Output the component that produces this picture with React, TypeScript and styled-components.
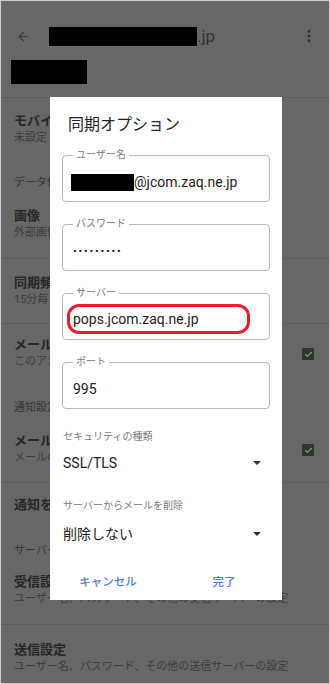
import React from "react";
import styled, { createGlobalStyle } from "styled-components";
import { ArrowLeft, EllipsisVertical, Check } from "lucide-react";

const GlobalStyle = createGlobalStyle`
  body {
    margin: 0;
    font-family: Roboto, "Noto Sans CJK JP", sans-serif;
  }
`;

const Screen = styled.div`
  position: relative;
  width: 330px;
  height: 684px;
  box-sizing: border-box;
  border: 1px solid #cfcfcf;
  background: #676767;
  overflow: hidden;
  font-family: Roboto, "Noto Sans CJK JP", sans-serif;
`;

const Header = styled.div`
  height: 96px;
  display: flex;
  flex-direction: column;
`;

const AppBar = styled.div`
  display: flex;
  align-items: center;
  height: 20px;
  margin-top: 25px;
  padding: 0 12px 0 15px;
  color: #333;
`;

const BarTitle = styled.div`
  flex: 1;
  display: flex;
  align-items: center;
  margin-left: 18px;
  font-size: 17px;
  color: #333;
`;

const Redact = styled.span<{ w: number; h: number }>`
  display: inline-block;
  width: ${(p) => p.w}px;
  height: ${(p) => p.h}px;
  background: #000;
`;

const AccountRow = styled.div`
  margin: 14px 0 0 10px;
`;

const Divider = styled.div`
  height: 1px;
  background: #5d5d5d;
`;

const Item = styled.div<{ h: number; pt: number }>`
  height: ${(p) => p.h}px;
  box-sizing: border-box;
  padding: ${(p) => p.pt}px 15px 0 13px;
  display: flex;
  align-items: flex-start;
  white-space: nowrap;
`;

const ItemText = styled.div`
  flex: 1;
  display: flex;
  flex-direction: column;
`;

const ItemTitle = styled.div`
  font-size: 13px;
  line-height: 17px;
  font-weight: 700;
  color: #262626;
`;

const ItemSub = styled.div`
  font-size: 11px;
  line-height: 17px;
  color: #3d3d3d;
`;

const Category = styled.div`
  font-size: 11px;
  line-height: 17px;
  color: #363636;
`;

const Box = styled.span`
  width: 12px;
  height: 12px;
  margin-top: 12px;
  border-radius: 1px;
  background: #2b3727;
  display: flex;
  align-items: center;
  justify-content: center;
  color: #8e9d89;
`;

const Dialog = styled.div`
  position: absolute;
  left: 49px;
  top: 96px;
  width: 232px;
  height: 503px;
  box-sizing: border-box;
  background: #fff;
  padding: 17px 12px 0 12px;
  display: flex;
  flex-direction: column;
`;

const DialogTitle = styled.div`
  font-size: 16px;
  line-height: 22px;
  color: #222;
  padding-left: 6px;
  margin-bottom: 13px;
`;

const Fields = styled.div`
  display: flex;
  flex-direction: column;
  gap: 16px;
`;

const Field = styled.fieldset`
  margin: 0;
  height: 53px;
  box-sizing: border-box;
  border: 1px solid #b9b9b9;
  border-radius: 4px;
  padding: 0 10px;
  min-width: 0;
`;

const Legend = styled.legend`
  font-size: 10px;
  line-height: 12px;
  color: #7a7a7a;
  padding: 0 3px;
`;

const Value = styled.div`
  margin-top: 11px;
  font-size: 14px;
  line-height: 20px;
  color: #222;
  display: flex;
  align-items: center;
  white-space: nowrap;
`;

const Dots = styled(Value)`
  font-size: 11px;
  letter-spacing: 1.8px;
  margin-top: 12px;
`;

const Highlight = styled.div`
  width: 183px;
  height: 30px;
  box-sizing: border-box;
  margin: 5px 0 0 -6px;
  padding-left: 3px;
  border: 3px solid #e3202b;
  border-radius: 12px;
  font-size: 14px;
  line-height: 24px;
  color: #222;
  white-space: nowrap;
`;

const SmallLabel = styled.div<{ mt: number }>`
  margin-top: ${(p) => p.mt}px;
  padding-left: 1px;
  font-size: 10px;
  line-height: 14px;
  color: #7a7a7a;
`;

const Select = styled.div<{ mt: number }>`
  margin-top: ${(p) => p.mt}px;
  padding: 0 9px 0 1px;
  display: flex;
  align-items: center;
  justify-content: space-between;
  font-size: 14px;
  line-height: 20px;
  color: #222;
`;

const Caret = styled.span`
  width: 0;
  height: 0;
  border-left: 4px solid transparent;
  border-right: 4px solid transparent;
  border-top: 4px solid #333;
`;

const Actions = styled.div`
  margin: 30px -12px 0;
  display: grid;
  grid-template-columns: 1fr 1fr;
`;

const Action = styled.span`
  text-align: center;
  font-size: 11.5px;
  line-height: 16px;
  font-weight: 500;
  color: #4f80d2;
`;

export default function App() {
  return (
    <>
      <GlobalStyle />
      <Screen>
        <Header>
          <AppBar>
            <ArrowLeft size={15} strokeWidth={1.8} color="#3a3a3a" />
            <BarTitle>
              <Redact w={148} h={19} />
              .jp
            </BarTitle>
            <EllipsisVertical size={16} strokeWidth={2.6} color="#333" />
          </AppBar>
          <AccountRow>
            <Redact w={76} h={24} />
          </AccountRow>
        </Header>
        <Divider />
        <Item h={62} pt={14}>
          <ItemText>
            <ItemTitle>モバイルデータ使用時</ItemTitle>
            <ItemSub>未設定</ItemSub>
          </ItemText>
        </Item>
        <Item h={40} pt={14}>
          <Category>データ使用量</Category>
        </Item>
        <Item h={58} pt={7}>
          <ItemText>
            <ItemTitle>画像</ItemTitle>
            <ItemSub>外部画像を表示する前に確認する</ItemSub>
          </ItemText>
        </Item>
        <Divider />
        <Item h={64} pt={15}>
          <ItemText>
            <ItemTitle>同期頻度</ItemTitle>
            <ItemSub>15分毎</ItemSub>
          </ItemText>
        </Item>
        <Divider />
        <Item h={66} pt={12}>
          <ItemText>
            <ItemTitle>メールを同期</ItemTitle>
            <ItemSub>このアカウントからメールを同期する</ItemSub>
          </ItemText>
          <Box>
            <Check size={9} strokeWidth={3} />
          </Box>
        </Item>
        <Item h={35} pt={9}>
          <Category>通知設定</Category>
        </Item>
        <Item h={57} pt={7}>
          <ItemText>
            <ItemTitle>メール通知</ItemTitle>
            <ItemSub>メールの受信時に通知する</ItemSub>
          </ItemText>
          <Box>
            <Check size={9} strokeWidth={3} />
          </Box>
        </Item>
        <Divider />
        <Item h={44} pt={13}>
          <ItemTitle>通知を管理</ItemTitle>
        </Item>
        <Item h={38} pt={15}>
          <Category>サーバー設定</Category>
        </Item>
        <Item h={59} pt={8}>
          <ItemText>
            <ItemTitle>受信設定</ItemTitle>
            <ItemSub>ユーザー名、パスワード、その他の受信サーバーの設定</ItemSub>
          </ItemText>
        </Item>
        <Divider />
        <Item h={60} pt={16}>
          <ItemText>
            <ItemTitle>送信設定</ItemTitle>
            <ItemSub>ユーザー名、パスワード、その他の送信サーバーの設定</ItemSub>
          </ItemText>
        </Item>

        <Dialog>
          <DialogTitle>同期オプション</DialogTitle>
          <Fields>
            <Field>
              <Legend>ユーザー名</Legend>
              <Value>
                <Redact w={63} h={17} style={{ marginLeft: -2 }} />
                @jcom.zaq.ne.jp
              </Value>
            </Field>
            <Field>
              <Legend>パスワード</Legend>
              <Dots>•••••••••</Dots>
            </Field>
            <Field>
              <Legend>サーバー</Legend>
              <Highlight>pops.jcom.zaq.ne.jp</Highlight>
            </Field>
            <Field>
              <Legend>ポート</Legend>
              <Value>995</Value>
            </Field>
          </Fields>
          <SmallLabel mt={21}>セキュリティの種類</SmallLabel>
          <Select mt={9}>
            SSL/TLS
            <Caret />
          </Select>
          <SmallLabel mt={26}>サーバーからメールを削除</SmallLabel>
          <Select mt={11}>
            削除しない
            <Caret />
          </Select>
          <Actions>
            <Action>キャンセル</Action>
            <Action>完了</Action>
          </Actions>
        </Dialog>
      </Screen>
    </>
  );
}
